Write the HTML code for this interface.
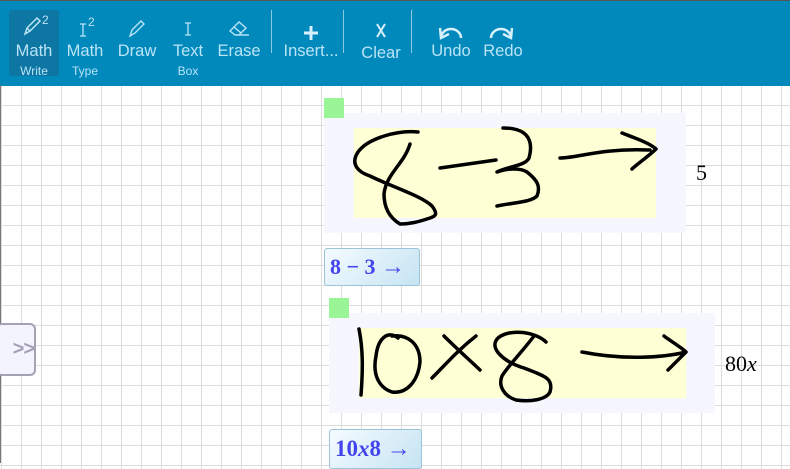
<!DOCTYPE html>
<html><head><meta charset="utf-8"><style>
body{margin:0;width:790px;height:463px;overflow:hidden;position:relative;font-family:"Liberation Sans",sans-serif;
background-color:#fff;background-image:linear-gradient(#ddd 1px,transparent 1px),linear-gradient(90deg,#ddd 1px,transparent 1px);background-size:20px 20px;background-position:1px 5px}
.tb{position:absolute;left:0;top:0;width:790px;height:85px;background:#0189bc;border-top:1px solid #555}
.b{position:absolute;top:11px;color:#b9e4f6;text-align:center;font-size:16.5px}
.b .s{font-size:12px;display:block;margin-top:3px}
.b .i{height:30px;display:block}
.sep{position:absolute;top:9px;width:1px;height:43px;background:#8cc8e0}
.a{position:absolute}
.lt{background:#f6f6ff}.ye{background:#ffffd6}.gr{background:#99f596}
.chip{position:absolute;box-sizing:border-box;border:1px solid #9cc3d7;border-radius:3px;background:linear-gradient(135deg,#f4fbff,#c6e4f3);color:#4444ee;font-family:"Liberation Serif",serif;font-size:22px;font-weight:bold;line-height:36px;padding:0 5px;white-space:nowrap}
.chip .ar{font-weight:normal;font-size:24px}
</style></head><body>
<div class="tb">
<div class="b" style="left:9px;width:50px;height:66px;background:#0d76a3;border-radius:3px;top:9px"><span class="i" style="height:32px"><svg width="50" height="30"><path d="M16 24l2-6 10-10 3 3-10 10z M18 18l3 3" stroke="#b9e4f6" stroke-width="1.5" fill="none"/><text x="33" y="14" font-size="12" fill="#b9e4f6">2</text></svg></span>Math<span class="s">Write</span></div>
<div class="b" style="left:62px;width:46px"><span class="i"><svg width="46" height="30"><path d="M18 12h6M21 12v12M18 24h6" stroke="#b9e4f6" stroke-width="1.3"/><text x="26" y="14" font-size="12" fill="#b9e4f6">2</text></svg></span>Math<span class="s">Type</span></div>
<div class="b" style="left:114px;width:46px"><span class="i"><svg width="46" height="30"><path d="M16 24l2-6 9-9 3 3-9 9z" stroke="#b9e4f6" stroke-width="1.4" fill="none"/></svg></span>Draw</div>
<div class="b" style="left:166px;width:44px"><span class="i"><svg width="44" height="30"><path d="M19 11h6M22 11v12M19 23h6" stroke="#b9e4f6" stroke-width="1.3"/></svg></span>Text<span class="s">Box</span></div>
<div class="b" style="left:216px;width:46px"><span class="i"><svg width="46" height="30"><path d="M14 19l9-9 7 6-7 7h-4z M18 15l7 6 M19 23h14" stroke="#b9e4f6" stroke-width="1.4" fill="none"/></svg></span>Erase</div>
<div class="sep" style="left:271px"></div>
<div class="b" style="left:280px;width:62px"><span class="i"><svg width="62" height="30"><path d="M31 14v14M24 21h14" stroke="#d8f0fb" stroke-width="3"/></svg></span>Insert...</div>
<div class="sep" style="left:343px"></div>
<div class="b" style="left:358px;width:46px"><span class="i" style="height:32px"><svg width="46" height="32"><path d="M19 12l8 13M27 12l-8 13" stroke="#d8f0fb" stroke-width="2"/></svg></span>Clear</div>
<div class="sep" style="left:411px"></div>
<div class="b" style="left:428px;width:46px"><span class="i"><svg width="46" height="30"><path d="M13 26a10 9 0 0 1 20 0M12 16l1 10 8-4" stroke="#d8f0fb" stroke-width="2.5" fill="none"/></svg></span>Undo</div>
<div class="b" style="left:480px;width:46px"><span class="i"><svg width="46" height="30"><path d="M11 26a10 9 0 0 1 20 0M32 16l-1 10-8-4" stroke="#d8f0fb" stroke-width="2.5" fill="none"/></svg></span>Redo</div>
</div>
<div class="a" style="left:0;top:85px;width:1px;height:378px;background:#777"></div>
<div class="a" style="left:-4px;top:323px;width:36px;height:49px;border:2px solid #a4a2b4;border-radius:6px;background:#f4f4ff;color:#a4a2b4;font-size:20px;font-weight:bold;line-height:49px;text-align:right;padding-right:0"><span style="letter-spacing:-1px">&gt;&gt;</span></div>

<div class="a lt" style="left:324px;top:113px;width:362px;height:120px"></div>
<div class="a ye" style="left:354px;top:128px;width:302px;height:90px"></div>
<div class="a gr" style="left:324px;top:98px;width:20px;height:20px"></div>
<svg class="a" style="left:300px;top:90px" width="440" height="160"><g stroke="#000" stroke-width="3.5" fill="none" stroke-linecap="round" stroke-linejoin="round">
<path d="M118 42c-20-2-50 6-60 20-8 12 0 20 12 24 20 10 52 20 62 30 6 8 4 10-2 12-12 4-20 6-30 6-10-6-16-16-16-30 2-20 20-30 26-50"/>
<path d="M140 78l56-8"/><path d="M203 38c20 0 32 8 26 30-4 8-20 8-32 14 10-4 24-4 30 0 10 8 14 14 10 24-6 6-20 6-40 10"/>
<path d="M260 68c18 0 40-10 90-8M322 43c10 4 28 10 34 16-6 6-20 16-24 20"/></g>
<text x="396" y="90" font-family="Liberation Serif" font-size="22">5</text></svg>
<div class="chip" style="left:324px;top:248px;width:96px;height:38px">8 − 3 <span class="ar">→</span></div>

<div class="a lt" style="left:329px;top:313px;width:386px;height:100px"></div>
<div class="a ye" style="left:359px;top:328px;width:327px;height:70px"></div>
<div class="a gr" style="left:329px;top:298px;width:20px;height:20px"></div>
<svg class="a" style="left:300px;top:290px" width="480" height="130"><g stroke="#000" stroke-width="3.5" fill="none" stroke-linecap="round" stroke-linejoin="round">
<path d="M59 39c4 20 4 40 2 66"/><path d="M98 48c-10-8-20 0-22 18-4 20 4 32 16 36 14 2 26-10 28-30 0-18-12-28-28-26"/>
<path d="M144 46c14 14 30 28 36 34M176 46c-18 14-30 28-44 42"/>
<path d="M246 52c-10-10-36-14-48-4-10 10 6 24 26 30 20 8 30 10 26 24-4 8-20 10-34 8-12-4-18-14-14-24 6-10 20-24 32-40"/>
<path d="M282 62c40 8 80 6 104 0M364 46c8 6 18 12 22 16-4 4-12 12-18 18"/></g>
<text x="425" y="81" font-family="Liberation Serif" font-size="22">80<tspan font-style="italic">x</tspan></text></svg>
<div class="chip" style="left:329px;top:429px;width:93px;height:40px;font-size:23px;line-height:38px">10<i>x</i>8 <span class="ar">→</span></div>
</body></html>
